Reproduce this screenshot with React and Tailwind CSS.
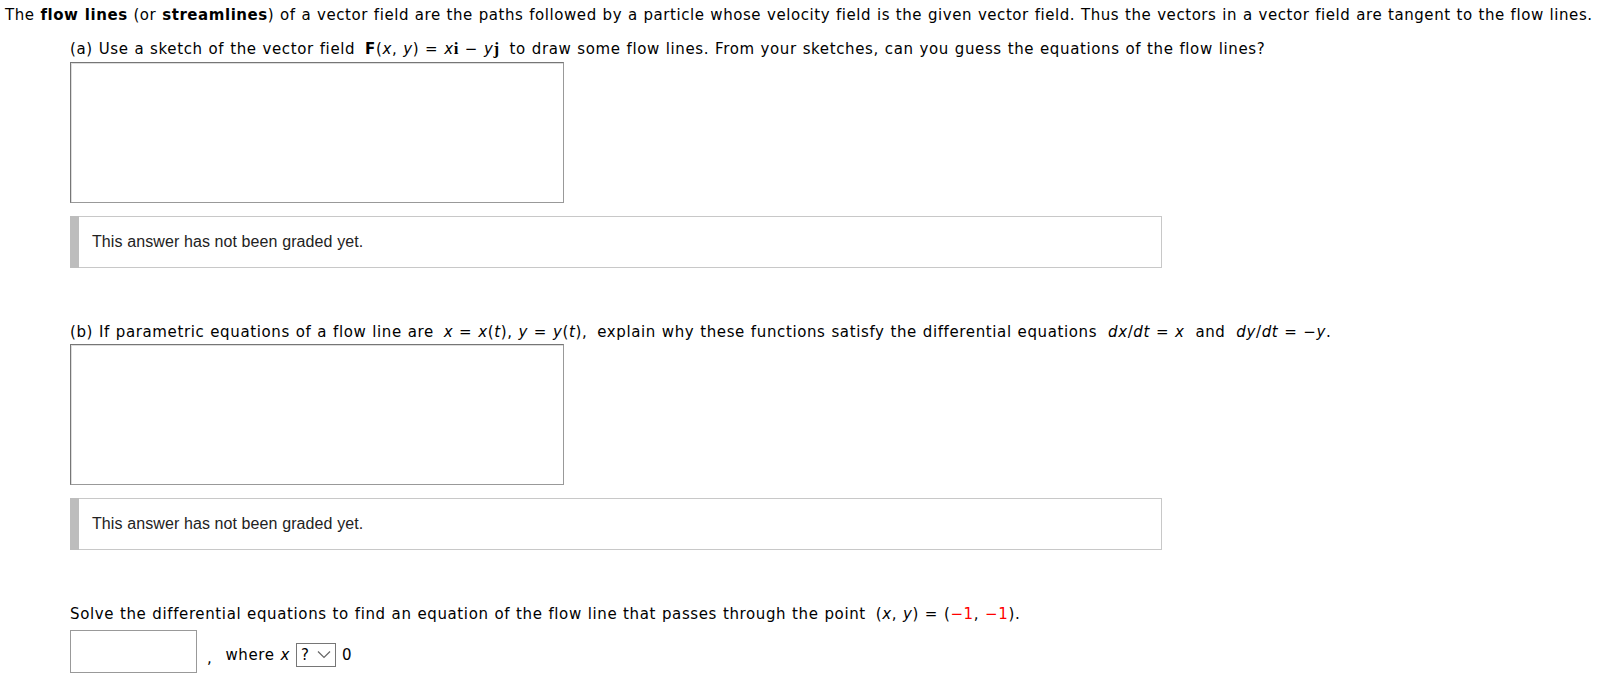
import React from "react";

const font = { fontFamily: '"DejaVu Sans", Verdana, sans-serif' };

const Graded = () => (
  <div className="ml-[70px] mt-[13px] flex h-[52px] w-[1092px] border border-[#c8c8c8] bg-white">
    <div className="w-[9px] -my-px -ml-px bg-[#bdbdbd]" />
    <div
      className="flex items-center pl-[13px] text-[16px] tracking-[0.1px] [word-spacing:0px] text-[#222]"
      style={{ fontFamily: '"Liberation Sans", Arial, sans-serif' }}
    >
      This answer has not been graded yet.
    </div>
  </div>
);

const Box = () => (
  <div className="ml-[70px] h-[141px] w-[494px] border border-[#767676] border-r-[#999] border-b-[#999] shadow-[inset_1px_1px_0_#ddd] bg-white" />
);

const serifBold = { fontFamily: '"Liberation Serif", serif' };

const App = () => {
  return (
    <div
      className="min-h-screen bg-white text-[15px] text-black leading-[18px] tracking-[0.62px] [word-spacing:0.5px]"
      style={font}
    >
      <p className="pl-[5px] pt-[6px] whitespace-nowrap tracking-[0.56px]">
        The <b>flow lines</b> (or <b>streamlines</b>) of a vector field are the paths followed by a particle whose
        velocity field is the given vector field. Thus the vectors in a vector field are tangent to the flow lines.
      </p>

      <p className="pl-[70px] mt-[16px] mb-[4px]">
        (a) Use a sketch of the vector field{" "}
        <span className="mx-[4px]">
          <b>F</b>(<i>x</i>, <i>y</i>) = <i>x</i>
          <b style={serifBold} className="text-[17px]">i</b> − <i>y</i>
          <b style={serifBold} className="text-[17px]">j</b>
        </span>{" "}
        to draw some flow lines. From your sketches, can you guess the equations of the flow lines?
      </p>
      <Box />
      <Graded />

      <p className="pl-[70px] mt-[55px] mb-[3px]">
        (b) If parametric equations of a flow line are{" "}
        <span className="mx-[4px]">
          <i>x</i> = <i>x</i>(<i>t</i>), <i>y</i> = <i>y</i>(<i>t</i>),
        </span>{" "}
        explain why these functions satisfy the differential equations{" "}
        <span className="mx-[5px]">
          <i>dx</i>/<i>dt</i> = <i>x</i>
        </span>{" "}
        and{" "}
        <span className="ml-[5px]">
          <i>dy</i>/<i>dt</i> = −<i>y</i>.
        </span>
      </p>
      <Box />
      <Graded />

      <p className="pl-[70px] mt-[55px]">
        Solve the differential equations to find an equation of the flow line that passes through the point{" "}
        <span className="ml-[4px]">
          (<i>x</i>, <i>y</i>) = (<span className="text-[#ff0000]">−1</span>,{" "}
          <span className="text-[#ff0000]">−1</span>).
        </span>
      </p>

      <div className="mt-[7px] ml-[70px] flex items-center">
        <div className="h-[43px] w-[127px] border border-[#999] bg-white" />
        <span className="ml-[10px] mt-[12px]">,</span>
        <span className="ml-[13px] mt-[6px]">
          where <i>x</i>
        </span>
        <div className="ml-[6px] mt-[6px] flex h-[24px] w-[40px] items-center border border-[#767676] bg-white pl-[4px]">
          <span>?</span>
          <svg className="ml-[7px]" width="14" height="9" viewBox="0 0 14 9">
            <path d="M1 1.5 L7 7.5 L13 1.5" fill="none" stroke="#666" strokeWidth="1.2" />
          </svg>
        </div>
        <span className="ml-[6px] mt-[6px]">0</span>
      </div>
    </div>
  );
};

export default App;
